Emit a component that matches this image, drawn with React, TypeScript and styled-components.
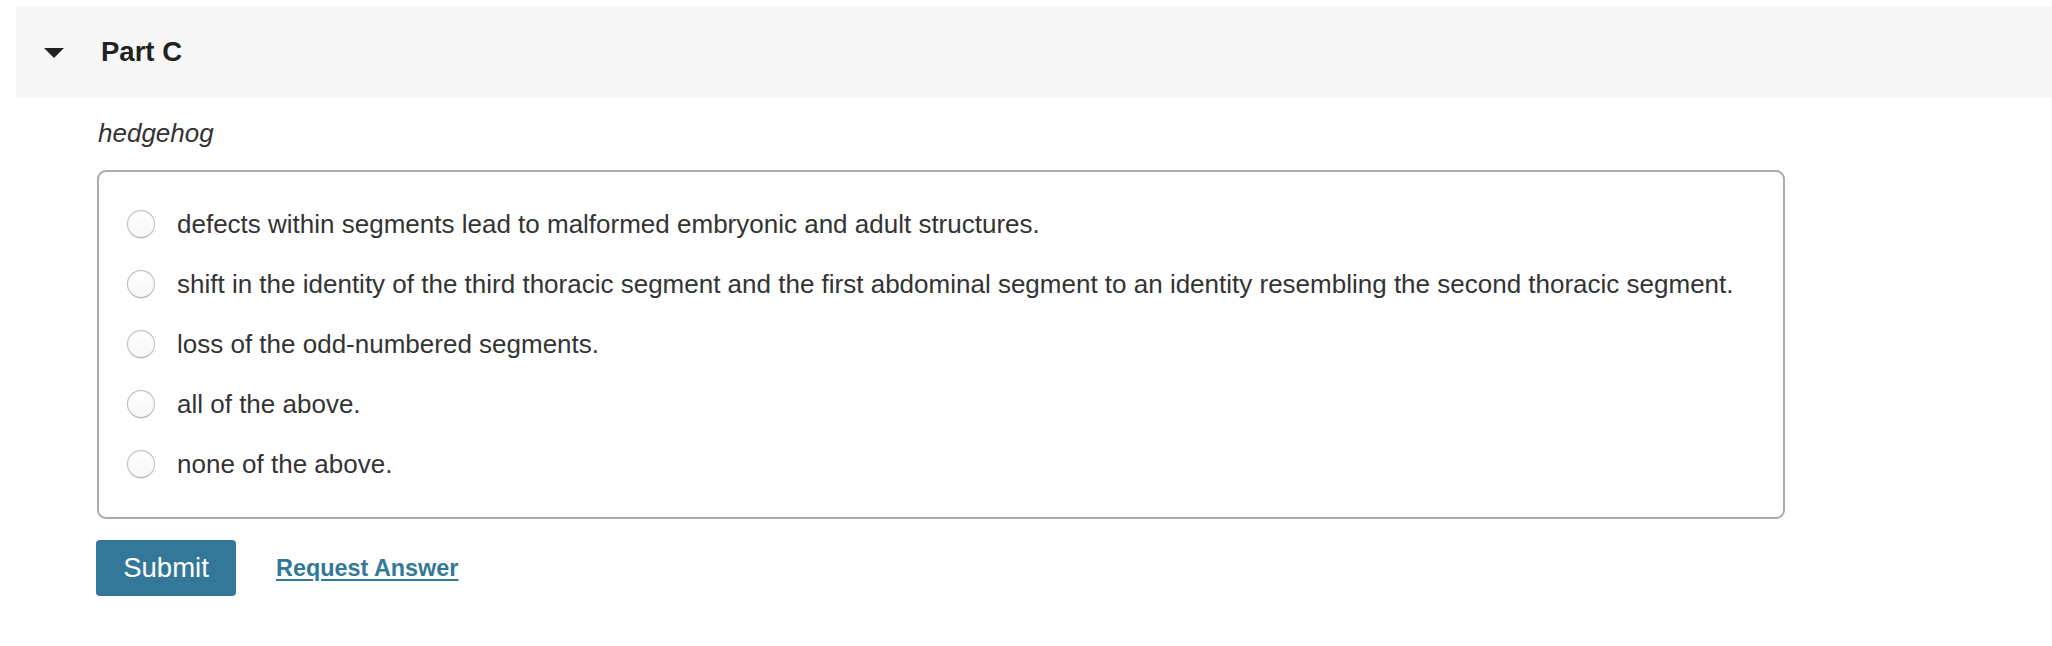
import React from "react";
import styled, { createGlobalStyle } from "styled-components";

const GlobalStyle = createGlobalStyle`
  html, body {
    margin: 0;
    padding: 0;
    background: #ffffff;
  }
  body {
    font-family: "Liberation Sans", Arial, Helvetica, sans-serif;
    color: #333333;
  }
`;

const Page = styled.div`
  padding-top: 6px;
  width: 2052px;
`;

const PartHeader = styled.div`
  margin-left: 16px;
  height: 92px;
  background: #f7f7f7;
  display: flex;
  align-items: center;
  padding-left: 28px;
  gap: 37px;
`;

const Caret = styled.span`
  width: 0;
  height: 0;
  border-left: 10.5px solid transparent;
  border-right: 10.5px solid transparent;
  border-top: 10px solid #222222;
  margin-top: 2px;
`;

const PartTitle = styled.h2`
  margin: 0;
  font-size: 27.5px;
  font-weight: 700;
  color: #222222;
  line-height: 32px;
`;

const Content = styled.div`
  padding-left: 97px;
`;

const Prompt = styled.p`
  margin: 20px 0 0 1px;
  font-size: 26px;
  font-style: italic;
  line-height: 30px;
  color: #333333;
`;

const ChoiceBox = styled.div`
  box-sizing: border-box;
  margin-top: 22px;
  width: 1688px;
  height: 349px;
  border: 2px solid #ababab;
  border-radius: 9px;
  padding: 22px 0 23px 28px;
  display: flex;
  flex-direction: column;
`;

const Choice = styled.label`
  display: flex;
  align-items: center;
  gap: 22px;
  height: 60px;
  font-size: 26px;
  line-height: 30px;
  color: #333333;
`;

const Radio = styled.input.attrs({ type: "radio" })`
  appearance: none;
  -webkit-appearance: none;
  margin: 0;
  width: 28px;
  height: 28px;
  flex: 0 0 28px;
  box-sizing: border-box;
  border-radius: 50%;
  border: 1.5px solid #bdbdbd;
  border-bottom-color: #adadad;
  background: linear-gradient(#ffffff, #f7f7f7);
  box-shadow: inset 0 1px 1px rgba(0, 0, 0, 0.04), 0 1px 1px rgba(0, 0, 0, 0.08);
`;

const Actions = styled.div`
  display: flex;
  align-items: center;
  gap: 40px;
  margin-top: 21px;
  margin-left: -1px;
`;

const SubmitButton = styled.button`
  width: 140px;
  height: 56px;
  border: none;
  border-radius: 4px;
  background: #337899;
  color: #ffffff;
  font-family: "Liberation Sans", Arial, Helvetica, sans-serif;
  font-size: 27.5px;
  padding: 0;
  cursor: pointer;
`;

const RequestLink = styled.a`
  font-size: 23.4px;
  font-weight: 700;
  color: #337899;
  text-decoration: underline;
  text-underline-offset: 3px;
  text-decoration-thickness: 2px;
  cursor: pointer;
`;

const choices = [
  "defects within segments lead to malformed embryonic and adult structures.",
  "shift in the identity of the third thoracic segment and the first abdominal segment to an identity resembling the second thoracic segment.",
  "loss of the odd-numbered segments.",
  "all of the above.",
  "none of the above.",
];

export default function App() {
  return (
    <>
      <GlobalStyle />
      <Page>
        <PartHeader>
          <Caret />
          <PartTitle>Part C</PartTitle>
        </PartHeader>
        <Content>
          <Prompt>hedgehog</Prompt>
          <ChoiceBox>
            {choices.map((c) => (
              <Choice key={c}>
                <Radio name="partC" />
                <span>{c}</span>
              </Choice>
            ))}
          </ChoiceBox>
          <Actions>
            <SubmitButton>Submit</SubmitButton>
            <RequestLink>Request Answer</RequestLink>
          </Actions>
        </Content>
      </Page>
    </>
  );
}
